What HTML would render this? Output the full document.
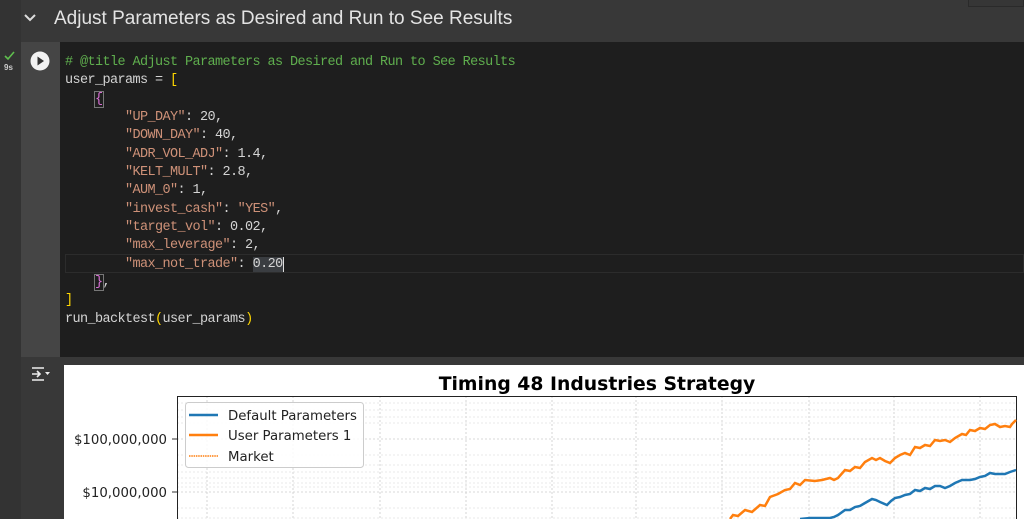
<!DOCTYPE html>
<html><head><meta charset="utf-8"><style>
*{margin:0;padding:0;box-sizing:border-box}
body{width:1024px;height:519px;overflow:hidden;background:#383838;position:relative;font-family:"Liberation Sans",sans-serif}
.hdr{position:absolute;left:0;top:0;width:1024px;height:42px;background:#383838}
.title{position:absolute;left:54px;top:8px;font-size:19px;color:#e3e3e3}
.lg{position:absolute;left:0;top:0;width:21px;height:519px;background:#333}
.gut{position:absolute;left:21px;top:42px;width:39px;height:315px;background:#454545}
.code{position:absolute;left:60px;top:42px;width:964px;height:315px;background:#1e1e1e}
pre{position:absolute;left:65px;top:54px;font-family:"Liberation Mono",monospace;font-size:13.5px;letter-spacing:-0.6px;line-height:18.35px;color:#d4d4d4}
.c{color:#5fae4e}.s{color:#ce9178}.y{color:#ffd700}.p{color:#da70d6;outline:1px solid #777}
.cur{position:absolute;left:65px;top:254px;width:959px;height:19px;border:1px solid #2c2c2c}
.out{position:absolute;left:64px;top:365px;width:960px;height:154px;background:#fff}
</style></head><body>
<div class="hdr"></div>
<div class="lg"></div>
<div style="position:absolute;left:968px;top:0;width:56px;height:7px;border:1px solid #2a2a2a;border-top:none;background:#363636"></div>
<svg style="position:absolute;left:22px;top:12px" width="16" height="12"><path d="M3 3 L8 8 L13 3" stroke="#ddd" stroke-width="2" fill="none"/></svg>
<div class="title">Adjust Parameters as Desired and Run to See Results</div>
<div class="gut"></div>
<div class="code"></div>
<svg style="position:absolute;left:3px;top:50px" width="14" height="12"><path d="M2 6 L5 9 L11 2" stroke="#5fbf4e" stroke-width="1.6" fill="none"/></svg>
<div style="position:absolute;left:4px;top:63px;font-size:8px;color:#ccc;font-weight:bold">9s</div>
<svg style="position:absolute;left:30px;top:51px" width="20" height="20"><circle cx="10" cy="10" r="9.5" fill="#f2f2f2"/><path d="M7.5 5.5 L14 10 L7.5 14.5 Z" fill="#333"/></svg>
<div class="cur"></div>
<pre><span class="c"># @title Adjust Parameters as Desired and Run to See Results</span>
user_params = <span class="y">[</span>
    <span class="p">{</span>
        <span class="s">"UP_DAY"</span>: 20,
        <span class="s">"DOWN_DAY"</span>: 40,
        <span class="s">"ADR_VOL_ADJ"</span>: 1.4,
        <span class="s">"KELT_MULT"</span>: 2.8,
        <span class="s">"AUM_0"</span>: 1,
        <span class="s">"invest_cash"</span>: <span class="s">"YES"</span>,
        <span class="s">"target_vol"</span>: 0.02,
        <span class="s">"max_leverage"</span>: 2,
        <span class="s">"max_not_trade"</span>: <span style="background:#3a3d41">0.20</span><span style="border-left:1px solid #ddd"></span>
    <span class="p">}</span>,
<span class="y">]</span>
run_backtest<span class="y">(</span>user_params<span class="y">)</span></pre>
<svg style="position:absolute;left:30px;top:365px" width="22" height="18"><path d="M2 3 H14 M2 9 H10 M7 6 L10 9 L7 12 M2 15 H14" stroke="#eee" stroke-width="1.6" fill="none"/><path d="M15 7 H20 L17.5 10 Z" fill="#eee"/></svg>
<div class="out"></div>
<svg style="position:absolute;left:0;top:0" width="1024" height="519">
<text x="597" y="390" text-anchor="middle" font-family="DejaVu Sans,sans-serif" font-weight="bold" font-size="18.8" fill="#000">Timing 48 Industries Strategy</text>
<g stroke="#ccc" stroke-width="0.8" stroke-dasharray="2,2">
<path d="M207 396V519M293 396V519M380 396V519M466 396V519M552 396V519M636 396V519M722 396V519M809 396V519M894 396V519M980 396V519"/>
<path d="M177 439H1016M177 492H1016"/>
<path d="M177 403H1016M177 410H1016M177 417H1016M177 423H1016M177 455H1016M177 465H1016M177 472H1016M177 478H1016M177 483H1016M177 487H1016M177 508H1016M177 518H1016" stroke="#e2e2e2"/>
</g>
<rect x="177.5" y="396.5" width="839" height="130" fill="none" stroke="#222" stroke-width="1"/>
<g stroke="#333"><path d="M172 439H177M172 492H177"/></g>
<text x="167" y="444" text-anchor="end" font-family="DejaVu Sans,sans-serif" font-size="13.3" fill="#222">$100,000,000</text>
<text x="167" y="497" text-anchor="end" font-family="DejaVu Sans,sans-serif" font-size="13.3" fill="#222">$10,000,000</text>
<polyline fill="none" stroke="#ff7f0e" stroke-width="2.5" points="730,519 733,515 738,516 745,510 752,512 760,505 765,506 770,497 778,494 785,490 790,489 795,483 800,485 805,480 815,481 822,480 830,478 834,480 838,478 845,470 850,471 855,467 860,468 865,462 872,458 876,460 880,458 885,461 890,463 895,458 900,455 905,453 910,455 915,447 920,448 925,445 930,446 935,440 940,441 945,440 950,442 955,438 962,434 966,435 970,430 975,431 980,428 985,429 990,425 995,424 1000,427 1005,426 1010,427 1012,424 1016,420"/>
<polyline fill="none" stroke="#1f77b4" stroke-width="2.5" points="800,519 810,518 820,518 830,518 834,517 838,515 845,510 850,510 855,507 860,506 865,503 872,499 876,500 880,502 887,505 891,501 895,498 900,497 905,495 910,494 915,490 920,491 925,488 930,489 935,486 940,486 945,488 950,486 955,483 962,480 970,480 975,479 980,477 985,476 990,473 995,474 1005,474 1010,472 1016,470"/>
<rect x="185.5" y="402.5" width="178" height="65" rx="3" fill="#fff" fill-opacity="0.85" stroke="#ccc"/>
<path d="M189 415H218" stroke="#1f77b4" stroke-width="2.5"/>
<path d="M189 435H218" stroke="#ff7f0e" stroke-width="2.5"/>
<path d="M189 456H218" stroke="#ff7f0e" stroke-width="1.5" stroke-dasharray="1.5,0.8"/>
<g font-family="DejaVu Sans,sans-serif" font-size="13.3" fill="#222">
<text x="228" y="420">Default Parameters</text>
<text x="228" y="440">User Parameters 1</text>
<text x="228" y="461">Market</text>
</g>
</svg>
</body></html>
